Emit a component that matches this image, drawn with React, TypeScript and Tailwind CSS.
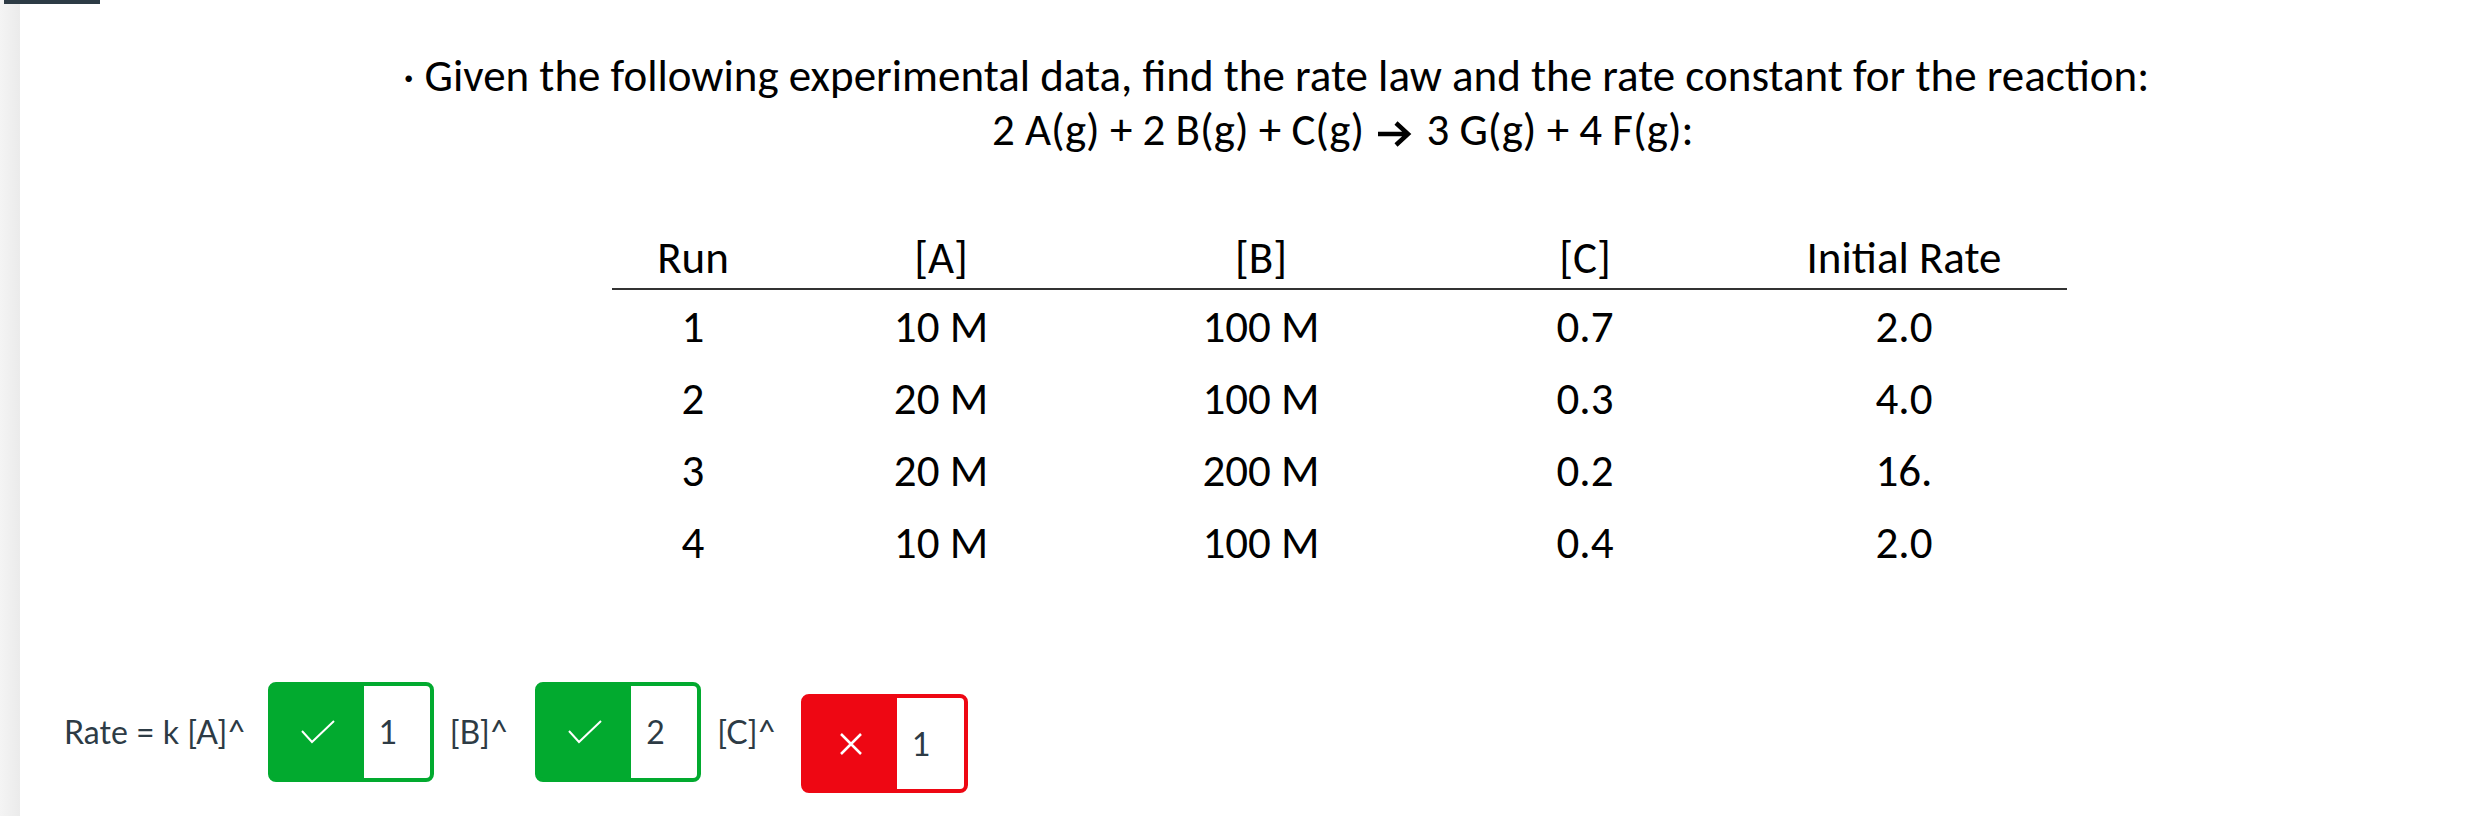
import React from 'react';

type Row = { run: string; a: string; b: string; c: string; rate: string };

const ROWS: Row[] = [
  { run: '1', a: '10 M', b: '100 M', c: '0.7', rate: '2.0' },
  { run: '2', a: '20 M', b: '100 M', c: '0.3', rate: '4.0' },
  { run: '3', a: '20 M', b: '200 M', c: '0.2', rate: '16.' },
  { run: '4', a: '10 M', b: '100 M', c: '0.4', rate: '2.0' },
];

const docFont = { fontFamily: "Carlito, 'Liberation Sans', sans-serif" } as const;

const CheckIcon = () => (
  <svg width="34" height="24" viewBox="0 0 34 24" fill="none">
    <polyline points="1,11 11,22 33,1" stroke="white" strokeWidth="2" />
  </svg>
);

const CrossIcon = () => (
  <svg width="22" height="22" viewBox="0 0 22 22" fill="none">
    <path d="M1 1 L21 21 M21 1 L1 21" stroke="white" strokeWidth="2.5" />
  </svg>
);

// bold arrow used in the reaction equation
const ReactionArrow = () => (
  <svg width="36" height="30" viewBox="0 0 36 30" fill="none" className="inline-block align-[-4px] mx-[3px]">
    <path d="M1 15 H31 M19 4 L31 15 L19 26" stroke="black" strokeWidth="4.5" strokeLinejoin="miter" />
  </svg>
);

interface AnswerBoxProps {
  value: string;
  correct: boolean;
}

const AnswerBox: React.FC<AnswerBoxProps> = ({ value, correct }) => (
  <div
    className={
      correct
        ? 'flex w-[166px] h-[100px] rounded-[8px] border-4 border-[#02aa2f] bg-[#02aa2f] ml-[27px]'
        : 'flex w-[167px] h-[99px] rounded-[8px] border-4 border-[#ee0713] bg-[#ee0713] ml-[25px] mt-[12px]'
    }
  >
    <div className="w-[92px] flex items-center justify-center">
      {correct ? <CheckIcon /> : <CrossIcon />}
    </div>
    <div className="flex-1 bg-white rounded-r-[4px] flex items-center pl-[15px] text-[32px] text-[#2d3b45]">
      {value}
    </div>
  </div>
);

export default function App() {
  return (
    <div className="relative h-[816px] w-[2480px] flex bg-white overflow-hidden">
      <div className="absolute top-0 left-[4px] w-[96px] h-[4px] bg-[#2d3b45]" />
      <div className="w-[20px] h-full bg-gradient-to-r from-[#f4f4f4] to-[#ebebeb]" />

      <div className="flex-1 flex flex-col">
        <div className="text-[45px] leading-[54px] text-black mt-[49px]" style={docFont}>
          <div className="pl-[383px] whitespace-nowrap">
            · Given the following experimental data, find the rate law and the rate constant for the reaction:
          </div>
          <div className="pl-[972px] whitespace-nowrap">
            2 A(g) + 2 B(g) + C(g) <ReactionArrow /> 3 G(g) + 4 F(g):
          </div>
        </div>

        <div className="ml-[592px] w-[1455px] mt-[74px] text-[45px] text-black" style={docFont}>
          <div className="grid grid-cols-[162px_334px_306px_342px_296px] h-[54px] pt-[4px] leading-[45px] items-start text-center">
            <div>Run</div>
            <div>[A]</div>
            <div>[B]</div>
            <div>[C]</div>
            <div>Initial Rate</div>
          </div>
          <div className="h-[2px] bg-[#333] mt-[3px]" />
          <div className="mt-[1px]">
            {ROWS.map(r => (
              <div key={r.run} className="grid grid-cols-[162px_334px_306px_342px_296px] h-[72px] leading-[54px] items-center text-center">
                <div>{r.run}</div>
                <div>{r.a}</div>
                <div>{r.b}</div>
                <div>{r.c}</div>
                <div>{r.rate}</div>
              </div>
            ))}
          </div>
        </div>

        <div
          className="flex items-start mt-[103px] ml-[44px] text-[32px] text-[#2d3b45]"
          style={{ fontFamily: "Lato, 'Liberation Sans', sans-serif" }}
        >
          <div className="h-[100px] flex items-center mr-[-5px]">Rate = k [A]^</div>
          <AnswerBox value="1" correct />
          <div className="h-[100px] flex items-center ml-[16px]">[B]^</div>
          <AnswerBox value="2" correct />
          <div className="h-[100px] flex items-center ml-[16px]">[C]^</div>
          <AnswerBox value="1" correct={false} />
        </div>
      </div>
    </div>
  );
}
